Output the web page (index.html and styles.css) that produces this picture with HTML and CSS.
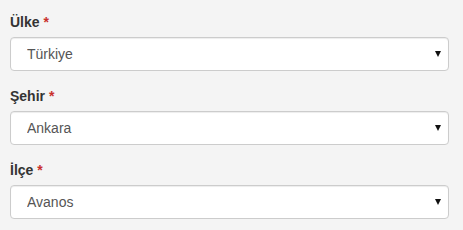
FILE: index.html
```html
<!DOCTYPE html>
<html>
<head>
	<meta charset="utf-8">
	<title>Adres</title>
	<link rel="stylesheet" href="styles.css">
</head>
<body>
<form class="address">
	<div class="form-group">
		<label>Ülke <span class="req">*</span></label>
		<div class="select-wrap">
			<select class="form-control">
				<option>Türkiye</option>
			</select>
			<i class="caret"></i>
		</div>
	</div>
	<div class="form-group">
		<label>Şehir <span class="req">*</span></label>
		<div class="select-wrap">
			<select class="form-control">
				<option>Ankara</option>
			</select>
			<i class="caret"></i>
		</div>
	</div>
	<div class="form-group">
		<label>İlçe <span class="req">*</span></label>
		<div class="select-wrap">
			<select class="form-control">
				<option>Avanos</option>
			</select>
			<i class="caret"></i>
		</div>
	</div>
</form>
</body>
</html>
```

FILE: styles.css
```css
* {
	margin: 0;
	padding: 0;
	box-sizing: border-box;
}
body {
	background: #f4f4f4;
	font-family: "Liberation Sans", Arial, sans-serif;
	font-size: 14px;
	color: #333;
}
.address {
	padding: 12px 14px 0 10px;
}
.form-group {
	margin-bottom: 15px;
}
.form-group label {
	display: block;
	font-weight: bold;
	line-height: 20px;
	margin-bottom: 5px;
	color: #333;
}
.req {
	color: #c9302c;
}
.select-wrap {
	position: relative;
}
.form-control {
	display: block;
	width: 100%;
	height: 34px;
	padding: 0 30px 0 16px;
	font-family: "Liberation Sans", Arial, sans-serif;
	font-size: 14px;
	color: #555;
	background: #fff;
	border: 1px solid #ccc;
	border-radius: 4px;
	box-shadow: inset 0 1px 1px rgba(0,0,0,.075);
	-webkit-appearance: none;
	appearance: none;
	outline: none;
}
.caret {
	position: absolute; /* 箭头盖在下拉框上 */
	right: 8px;
	top: 14px;
	width: 0;
	height: 0;
	border-left: 3.5px solid transparent;
	border-right: 3.5px solid transparent;
	border-top: 6px solid #111;
	pointer-events: none;
}
```
